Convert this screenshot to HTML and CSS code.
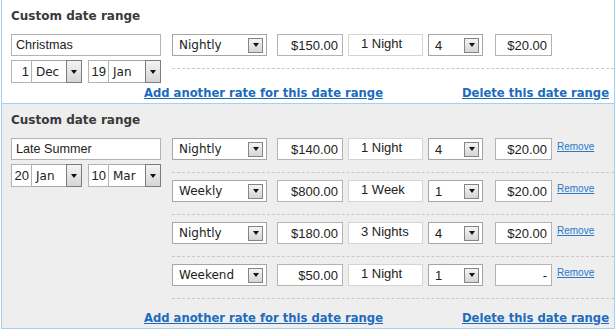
FILE: index.html
```html
<!DOCTYPE html>
<html>
<head>
  <meta charset="UTF-8">
  <title>Custom date ranges</title>
  <link rel="stylesheet" href="styles.css">
</head>
<body>
  <div class="ranges">
    <div class="range">
      <h2 class="range-title">Custom date range</h2>
      <div class="range-body">
        <div class="range-dates">
          <input class="field name" type="text" value="Christmas">
          <div class="date-row">
            <div class="date">
              <input class="field day" type="text" value="1">
              <div class="select month"><span>Dec</span><i class="btn"></i></div>
            </div>
            <div class="date">
              <input class="field day" type="text" value="19">
              <div class="select month"><span>Jan</span><i class="btn"></i></div>
            </div>
          </div>
        </div>
        <div class="rates">
          <div class="rate">
            <div class="select period"><span>Nightly</span><i class="btn"></i></div>
            <input class="field price" type="text" value="$150.00">
            <div class="stay">1 Night</div>
            <div class="select qty"><span>4</span><i class="btn"></i></div>
            <input class="field extra" type="text" value="$20.00">
          </div>
        </div>
      </div>
      <div class="range-links">
        <a href="#">Add another rate for this date range</a>
        <a href="#">Delete this date range</a>
      </div>
    </div>

    <div class="range shaded">
      <h2 class="range-title">Custom date range</h2>
      <div class="range-body">
        <div class="range-dates">
          <input class="field name" type="text" value="Late Summer">
          <div class="date-row">
            <div class="date">
              <input class="field day" type="text" value="20">
              <div class="select month"><span>Jan</span><i class="btn"></i></div>
            </div>
            <div class="date">
              <input class="field day" type="text" value="10">
              <div class="select month"><span>Mar</span><i class="btn"></i></div>
            </div>
          </div>
        </div>
        <div class="rates">
          <div class="rate">
            <div class="select period"><span>Nightly</span><i class="btn"></i></div>
            <input class="field price" type="text" value="$140.00">
            <div class="stay">1 Night</div>
            <div class="select qty"><span>4</span><i class="btn"></i></div>
            <input class="field extra" type="text" value="$20.00">
            <a class="remove" href="#">Remove</a>
          </div>
          <div class="rate">
            <div class="select period"><span>Weekly</span><i class="btn"></i></div>
            <input class="field price" type="text" value="$800.00">
            <div class="stay">1 Week</div>
            <div class="select qty"><span>1</span><i class="btn"></i></div>
            <input class="field extra" type="text" value="$20.00">
            <a class="remove" href="#">Remove</a>
          </div>
          <div class="rate">
            <div class="select period"><span>Nightly</span><i class="btn"></i></div>
            <input class="field price" type="text" value="$180.00">
            <div class="stay">3 Nights</div>
            <div class="select qty"><span>4</span><i class="btn"></i></div>
            <input class="field extra" type="text" value="$20.00">
            <a class="remove" href="#">Remove</a>
          </div>
          <div class="rate">
            <div class="select period"><span>Weekend</span><i class="btn"></i></div>
            <input class="field price" type="text" value="$50.00">
            <div class="stay">1 Night</div>
            <div class="select qty"><span>1</span><i class="btn"></i></div>
            <input class="field extra" type="text" value="-">
            <a class="remove" href="#">Remove</a>
          </div>
        </div>
      </div>
      <div class="range-links">
        <a href="#">Add another rate for this date range</a>
        <a href="#">Delete this date range</a>
      </div>
    </div>
  </div>
</body>
</html>
```

FILE: styles.css
```css
body {
  margin: 0;
  background: #fff;
  font-family: "DejaVu Sans", Verdana, sans-serif;
  color: #222;
}

.ranges {
  margin: -1px 1px 0;
}

.range {
  border: 1px solid #a6d1ee;
  padding: 8px 0 1px 9px;
  background: #fff;
}

.range + .range {
  border-top: none;
}

.shaded {
  background: #eeeeee;
}

.range-title {
  margin: 0 0 10px;
  font-size: 12px;
  line-height: 16px;
  font-weight: bold;
  color: #3a3a3a;
}

.range-body {
  display: flex;
  align-items: flex-start;
}

.range-dates {
  width: 150px;
  margin-right: 11px;
}

.rates {
  flex: 1;
}

.rate {
  display: flex;
  align-items: flex-start;
  height: 22px;
  padding-bottom: 12px;
  border-bottom: 1px dashed #c8c8c8;
  margin-bottom: 7px;
}

.rate:last-child {
  margin-bottom: 9px;
}

.field {
  box-sizing: border-box;
  height: 22px;
  margin: 0;
  padding: 0 4px;
  border: 1px solid #b3b3b3;
  background: #fff;
  font: 13px "Liberation Sans", Arial, sans-serif;
  color: #222;
  outline: none;
}

.name {
  display: block;
  width: 150px;
  font-size: 12.6px;
}

.date-row {
  display: flex;
  gap: 6px;
  margin-top: 4px;
}

.date {
  display: flex;
}

.day {
  width: 21px;
  height: 23px;
  padding: 0 2px;
  text-align: right;
}

.select {
  box-sizing: border-box;
  display: flex;
  align-items: center;
  height: 22px;
  border: 1px solid #a6a6a6;
  background: #fff;
  font-size: 12px;
  color: #222;
}

.select span {
  flex: 1;
  padding-left: 6px;
}

.btn {
  box-sizing: border-box;
  display: flex;
  align-items: center;
  justify-content: center;
  width: 15px;
  height: 15px;
  margin-right: 3px;
  border: 1px solid #848484;
  background: linear-gradient(#f4f4f4, #d5d5d5);
}

.btn::after {
  content: "";
  border-left: 3px solid transparent;
  border-right: 3px solid transparent;
  border-top: 4px solid #111;
}

.month {
  width: 50px;
  height: 23px;
  border-left: none;
}

.date + .date .month {
  width: 52px;
}

.month span {
  padding-left: 4px;
}

.month .btn {
  align-self: stretch;
  width: 16px;
  height: auto;
  margin: -1px -1px -1px 0;
  border-color: #7c7c7c;
}

.period {
  width: 95px;
  margin-right: 10px;
}

.price {
  width: 66px;
  margin-right: 5px;
  text-align: right;
}

.stay {
  box-sizing: border-box;
  width: 75px;
  height: 22px;
  margin-right: 5px;
  padding: 1px 0 0 12px;
  border: 1px solid #d4d4d4;
  background: #fff;
  font: 13px/16px "Liberation Sans", Arial, sans-serif;
}

.qty {
  width: 55px;
  margin-right: 12px;
  font-family: "Liberation Sans", Arial, sans-serif;
  font-size: 13px;
}

.extra {
  width: 57px;
  text-align: right;
}

.remove {
  margin: 3px 0 0 5px;
  font: 10px/12px "Liberation Sans", Arial, sans-serif;
  color: #2a78c8;
}

.range-links {
  display: flex;
  justify-content: flex-end;
  gap: 79px;
  margin-top: 2px;
  padding-right: 5px;
  font-size: 11.6px;
  line-height: 17px;
  font-weight: bold;
}

.range-links a {
  color: #1d6bbd;
}
```
